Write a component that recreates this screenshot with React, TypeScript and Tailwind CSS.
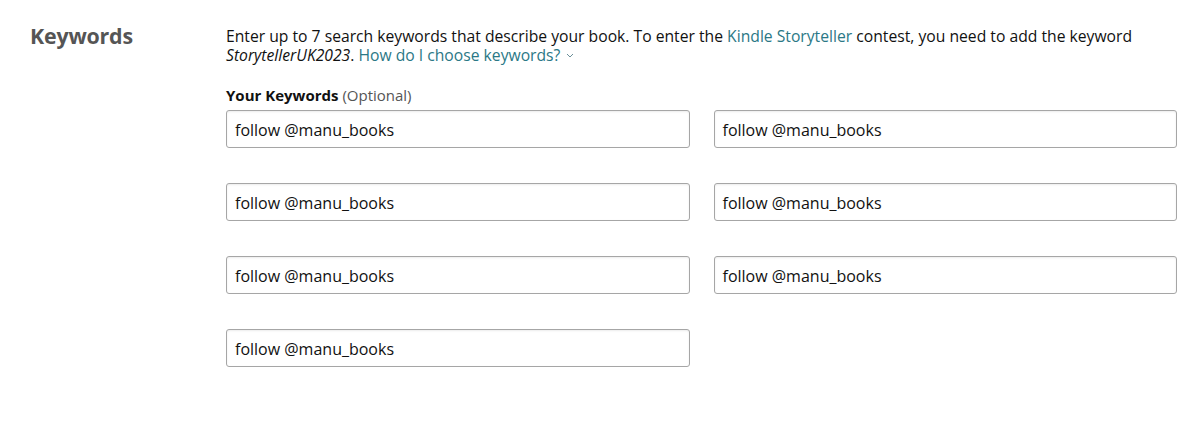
import React from "react";

const Box = () => (
  <div className="h-[38px] rounded-[3px] border border-[#a6a6a6] bg-white pl-[8px] pt-[1px] flex items-center text-[16px] text-[#111] shadow-[inset_0_1px_2px_rgba(0,0,0,0.08)]">
    follow @manu_books
  </div>
);

export default function App() {
  return (
    <div className="w-[1200px] h-[425px] bg-white flex" style={{ fontFamily: '"Open Sans", sans-serif' }}>
      <div className="w-[226px] shrink-0 pl-[30px] pt-[21px]">
        <h2 className="text-[21.4px] font-bold text-[#555] leading-[30px] tracking-[-0.2px]">Keywords</h2>
      </div>
      <div className="w-[951px] pt-[27px]">
        <p className="text-[15.7px] leading-[19px] text-[#111]">
          Enter up to 7 search keywords that describe your book. To enter the{" "}
          <span className="text-[#2b7886]">Kindle Storyteller</span> contest, you need to add the keyword{" "}
          <i>StorytellerUK2023</i>.{" "}
          <span className="text-[#2b7886]">
            How do I choose keywords?
            <svg className="inline-block ml-[6px] mb-[2px]" width="8" height="5" viewBox="0 0 8 5">
              <path d="M1 1l3 3 3-3" fill="none" stroke="#6b8f99" strokeWidth="1" />
            </svg>
          </span>
        </p>
        <div className="mt-[20px] text-[15px] leading-[20px] text-[#111]">
          <span className="font-bold">Your Keywords</span>{" "}
          <span className="text-[#555]">(Optional)</span>
        </div>
        <div className="mt-[5px] grid grid-cols-2 gap-x-[24px] gap-y-[35px]">
          <Box />
          <Box />
          <Box />
          <Box />
          <Box />
          <Box />
          <Box />
        </div>
      </div>
    </div>
  );
}
